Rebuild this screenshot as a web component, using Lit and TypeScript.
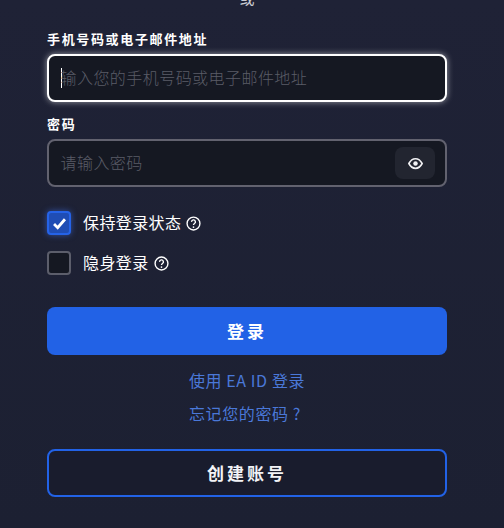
import { LitElement, html, css, svg } from "lit";
import { customElement } from "lit/decorators.js";

const help = html`<svg class="help" viewBox="0 0 14 14" width="15" height="15" aria-hidden="true">
  <circle cx="7" cy="7" r="6" fill="none" stroke="currentColor" stroke-width="1.300"></circle>
  <path d="M5.200 5.500a1.800 1.800 0 1 1 2.700 1.500c-.6.4-.9.7-.9 1.300" fill="none" stroke="currentColor" stroke-width="1.300"></path>
  <circle cx="7" cy="10.300" r=".8" fill="currentColor"></circle>
</svg>`;

const eye = svg`<path d="M.8 7c1.600-3 3.800-4.500 6.200-4.500S11.600 4 13.200 7c-1.600 3-3.800 4.500-6.200 4.500S2.400 10 .8 7z" fill="none" stroke="currentColor" stroke-width="1.500"></path><circle cx="7" cy="7" r="2.100" fill="currentColor"></circle>`;

@customElement("app-root")
export class AppRoot extends LitElement {
  static styles = css`
    :host {
      display: block;
      width: 504px;
      height: 528px;
      overflow: hidden;
      background: #1e2134;
      color: #fff;
      font-family: "Noto Sans CJK SC", "Liberation Sans", sans-serif;
    }
    .page {
      display: flex;
      flex-direction: column;
      box-sizing: border-box;
      height: 528px;
      padding: 0 57px 0 47px;
      background: linear-gradient(#1f2236, #1c2032);
    }
    .clip {
      height: 6px;
      margin-bottom: 24px;
      position: relative;
      overflow: hidden;
    }
    .clip span {
      position: absolute;
      left: 0;
      right: 0;
      bottom: 0;
      line-height: 16px;
      font-size: 15px;
      text-align: center;
      color: #c9cbd3;
    }
    .label {
      font-size: 13px;
      line-height: 18px;
      font-weight: 700;
      letter-spacing: 1.650px;
      margin-bottom: 6px;
    }
    .field {
      display: flex;
      align-items: center;
      box-sizing: border-box;
      height: 48px;
      padding: 0 10px 0 12px;
      border: 2px solid #62626f;
      border-radius: 8px;
      background: #151822;
      font-size: 16px;
      font-weight: 300;
      letter-spacing: 0.45px;
      color: #5a5c67;
    }
    .field.focus {
      border-color: #fff;
      box-shadow: 0 0 6px rgba(255, 255, 255, 0.55);
      margin-bottom: 13px;
      position: relative;
    }
    .caret {
      width: 1px;
      height: 20px;
      background: #fff;
      flex: none;
      margin-right: -1px;
    }
    .ph {
      flex: 1;
      white-space: nowrap;
      line-height: 22px;
      padding-bottom: 2px;
      margin-left: -0.5px;
    }
    .eye {
      display: flex;
      align-items: center;
      justify-content: center;
      width: 40px;
      height: 32px;
      border-radius: 8px;
      background: #222530;
      color: #f2f2f4;
    }
    .checks {
      display: flex;
      flex-direction: column;
      gap: 16px;
      margin-top: 24px;
      margin-bottom: 32px;
    }
    .check {
      display: flex;
      align-items: center;
      height: 24px;
      font-size: 16px;
      letter-spacing: 0.4px;
    }
    .check .t { line-height: 22px; padding-bottom: 2px; }
    .box {
      display: flex;
      align-items: center;
      justify-content: center;
      box-sizing: border-box;
      width: 24px;
      height: 24px;
      margin-right: 12px;
      border: 2px solid #5c5e6b;
      border-radius: 4px;
      background: #151822;
    }
    .box.on {
      border-color: #2563e8;
      background: #1f4db5;
      box-shadow: 0 0 6px rgba(70, 120, 255, 0.55);
    }
    .help { margin-left: 5px; flex: none; }
    .primary, .secondary {
      display: flex;
      align-items: center;
      justify-content: center;
      box-sizing: border-box;
      height: 48px;
      border-radius: 8px;
      font-size: 17px;
      font-weight: 700;
      letter-spacing: 3px;
      color: #fff;
    }
    .primary { background: #2262e6; }
    .secondary {
      border: 2px solid #2262e6;
      background: #191c2d;
      color: #f2f3f6;
    }
    .primary span, .secondary span { padding-bottom: 2px; }
    .links {
      display: flex;
      flex-direction: column;
      align-items: center;
      gap: 9px;
      margin-top: 13px;
      margin-bottom: 24px;
      font-size: 16px;
      line-height: 24px;
      letter-spacing: 0.6px;
      color: #4a78d8;
    }
    .forgot { padding-right: 4px; }
  `;

  render() {
    return html`<div class="page">
      <div class="clip"><span>或</span></div>
      <div class="label">手机号码或电子邮件地址</div>
      <div class="field focus"><span class="caret"></span><span class="ph">输入您的手机号码或电子邮件地址</span></div>
      <div class="label">密码</div>
      <div class="field">
        <span class="ph">请输入密码</span>
        <span class="eye"><svg viewBox="0 0 14 14" width="15" height="15" aria-hidden="true">${eye}</svg></span>
      </div>
      <div class="checks">
        <div class="check">
          <span class="box on"><svg viewBox="0 0 14 14" width="17" height="17" aria-hidden="true"><path d="M2.500 7.500l3 3 6-7" fill="none" stroke="#fff" stroke-width="2.300"></path></svg></span>
          <span class="t">保持登录状态</span>${help}
        </div>
        <div class="check"><span class="box"></span><span class="t">隐身登录</span>${help}</div>
      </div>
      <div class="primary"><span>登录</span></div>
      <div class="links"><span>使用 EA ID 登录</span><span class="forgot">忘记您的密码 ?</span></div>
      <div class="secondary"><span>创建账号</span></div>
    </div>`;
  }
}
